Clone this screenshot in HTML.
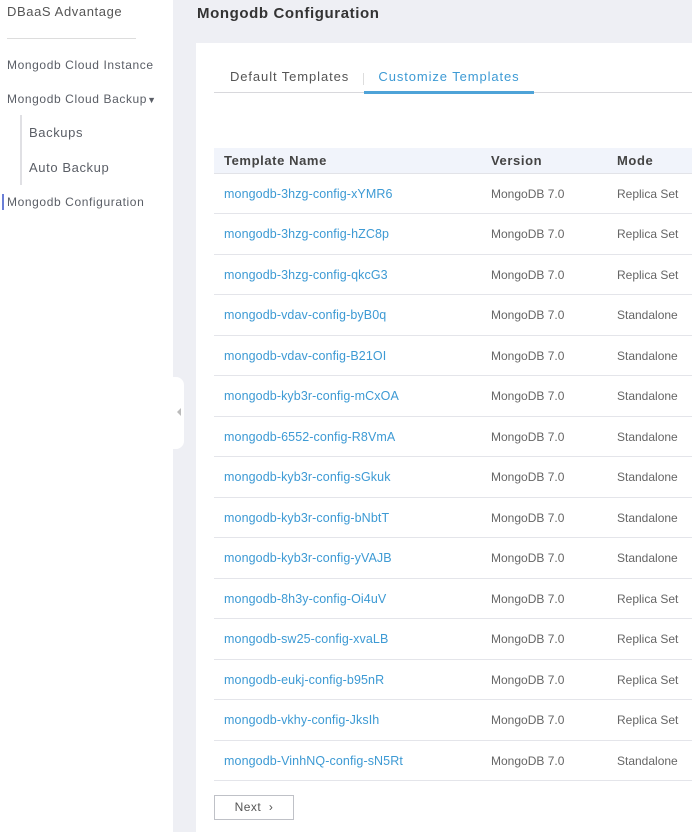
<!DOCTYPE html>
<html><head><style>
*{margin:0;padding:0;box-sizing:border-box}
body{width:692px;height:832px;overflow:hidden;background:#eeeff4;font-family:"Liberation Sans",sans-serif;position:relative}
.side{position:absolute;left:0;top:0;width:173px;height:832px;background:#fff;color:#5a5e66}
.side div{position:absolute;white-space:nowrap;letter-spacing:0.6px}
.handle{position:absolute;left:173px;top:377px;width:11px;height:72px;background:#fff;border-radius:0 8px 8px 0}
.handle:after{content:"";position:absolute;left:4px;top:31px;border:4px solid transparent;border-right:4px solid #bbb;border-left:0}
h1{position:absolute;left:197px;top:5px;font-size:15px;letter-spacing:0.6px;color:#333;font-weight:600}
.card{position:absolute;left:196px;top:43px;width:496px;height:789px;background:#fff}
.tabs{position:absolute;left:18px;top:24px;width:478px;height:26px;border-bottom:1px solid #d8d8dc;font-size:13px;letter-spacing:0.9px}
.t1{position:absolute;left:16px;top:2px;color:#555}
.sep{position:absolute;left:149px;top:6px;width:1px;height:12px;background:#ddd}
.t2{position:absolute;left:150px;top:0;width:170px;height:27px;color:#3d9ad4;text-align:center;padding-top:2px;border-bottom:3px solid #4ea3d8}
table{position:absolute;left:18px;top:105px;width:478px;border-collapse:collapse;font-size:12px}
th{background:#f1f4fb;height:25px;text-align:left;font-size:13px;letter-spacing:0.6px;color:#444;font-weight:600;border-bottom:1px solid #e2e3e8}
td{height:40.5px;border-bottom:1px solid #e4e5ea;color:#666;padding-top:1px}
td:first-child,th:first-child{padding-left:10px}
td:first-child{color:#3d9ad4;font-size:12.5px;letter-spacing:0.1px}
.next{position:absolute;left:18px;top:752px;width:80px;height:25px;border:1px solid #bfc1c7;font-size:12px;letter-spacing:0.5px;color:#555;text-align:center;line-height:23px}
</style></head><body>
<div class="side">
<div style="left:7px;top:4px;font-size:13px;color:#555">DBaaS Advantage</div>
<div style="left:7px;top:38px;width:129px;height:1px;background:#ddd"></div>
<div style="left:7px;top:58px;font-size:12px">Mongodb Cloud Instance</div>
<div style="left:7px;top:92px;font-size:12px">Mongodb Cloud Backup<span style="letter-spacing:0;font-size:9px">▼</span></div>
<div style="left:20px;top:115px;width:2px;height:70px;background:#e0e0e4"></div>
<div style="left:29px;top:125px;font-size:13px">Backups</div>
<div style="left:29px;top:160px;font-size:13px">Auto Backup</div>
<div style="left:2px;top:194px;width:2px;height:16px;background:#6b7fd7"></div>
<div style="left:7px;top:195px;font-size:12px">Mongodb Configuration</div>
</div>
<div class="handle"></div>
<h1>Mongodb Configuration</h1>
<div class="card">
<div class="tabs"><span class="t1">Default Templates</span><span class="sep"></span><span class="t2">Customize Templates</span></div>
<table>
<tr><th style="width:277px">Template Name</th><th style="width:126px">Version</th><th>Mode</th></tr>
<tr><td>mongodb-3hzg-config-xYMR6</td><td>MongoDB 7.0</td><td>Replica Set</td></tr>
<tr><td>mongodb-3hzg-config-hZC8p</td><td>MongoDB 7.0</td><td>Replica Set</td></tr>
<tr><td>mongodb-3hzg-config-qkcG3</td><td>MongoDB 7.0</td><td>Replica Set</td></tr>
<tr><td>mongodb-vdav-config-byB0q</td><td>MongoDB 7.0</td><td>Standalone</td></tr>
<tr><td>mongodb-vdav-config-B21OI</td><td>MongoDB 7.0</td><td>Standalone</td></tr>
<tr><td>mongodb-kyb3r-config-mCxOA</td><td>MongoDB 7.0</td><td>Standalone</td></tr>
<tr><td>mongodb-6552-config-R8VmA</td><td>MongoDB 7.0</td><td>Standalone</td></tr>
<tr><td>mongodb-kyb3r-config-sGkuk</td><td>MongoDB 7.0</td><td>Standalone</td></tr>
<tr><td>mongodb-kyb3r-config-bNbtT</td><td>MongoDB 7.0</td><td>Standalone</td></tr>
<tr><td>mongodb-kyb3r-config-yVAJB</td><td>MongoDB 7.0</td><td>Standalone</td></tr>
<tr><td>mongodb-8h3y-config-Oi4uV</td><td>MongoDB 7.0</td><td>Replica Set</td></tr>
<tr><td>mongodb-sw25-config-xvaLB</td><td>MongoDB 7.0</td><td>Replica Set</td></tr>
<tr><td>mongodb-eukj-config-b95nR</td><td>MongoDB 7.0</td><td>Replica Set</td></tr>
<tr><td>mongodb-vkhy-config-JksIh</td><td>MongoDB 7.0</td><td>Replica Set</td></tr>
<tr><td>mongodb-VinhNQ-config-sN5Rt</td><td>MongoDB 7.0</td><td>Standalone</td></tr>
</table>
<div class="next">Next &nbsp;›</div>
</div>
</body></html>
